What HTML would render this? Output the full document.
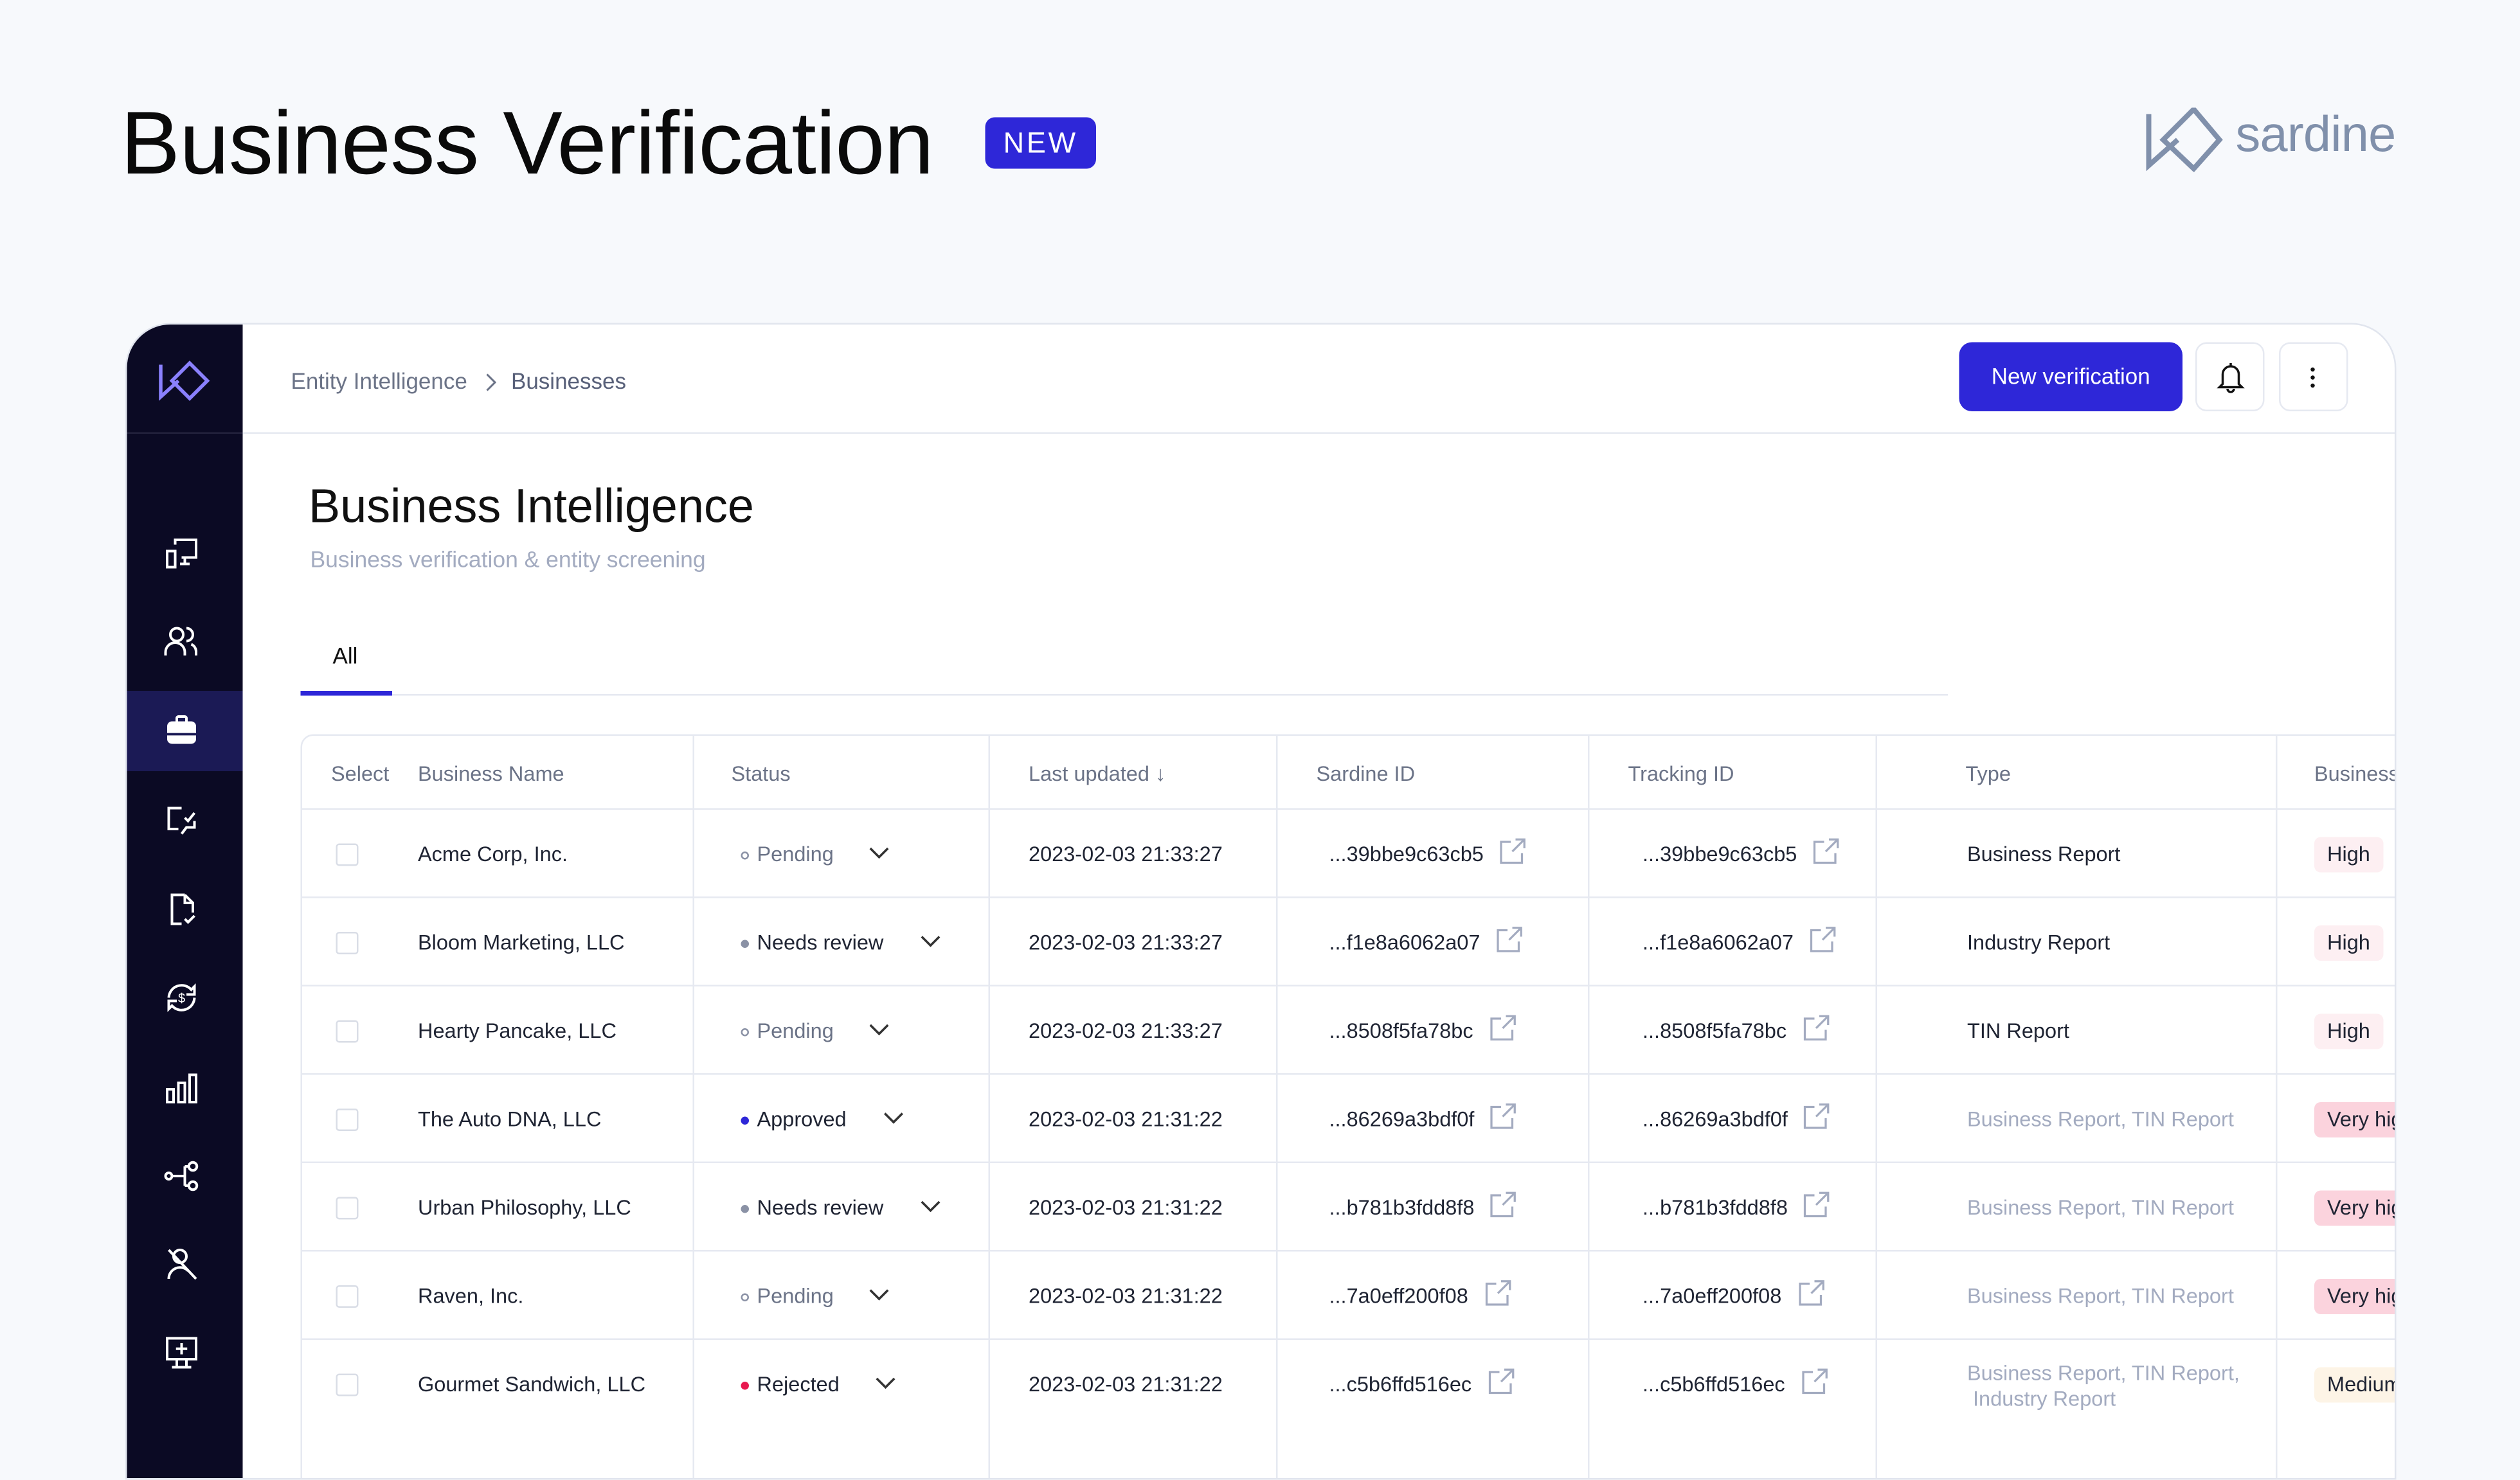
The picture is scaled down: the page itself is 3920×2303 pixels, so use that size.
<!DOCTYPE html>
<html><head><meta charset="utf-8">
<style>
*{margin:0;padding:0;box-sizing:border-box}
html,body{width:3920px;height:2208px;overflow:hidden;background:#f7f9fc}
#s{position:absolute;left:0;top:0;width:1568px;height:884px;transform:scale(2.5);transform-origin:0 0;font-family:"Liberation Sans",sans-serif;color:#1f2433}
.a{position:absolute;white-space:nowrap}
.card{position:absolute;left:78px;top:201px;width:1413px;height:720px;background:#fff;border:1.5px solid #e1e5ee;border-radius:28px 28px 0 0;overflow:hidden}
.side{position:absolute;left:0;top:0;width:72px;height:100%;background:#0b0a24}
.ic{position:absolute;left:22px;width:24px;height:24px}
.t{font-size:13px;line-height:16px}
.h{font-size:13px;color:#6b7387}
.vl{position:absolute;top:256px;width:1px;height:480px;background:#e6e9f1}
.hl{position:absolute;left:108px;width:1320px;height:1px;background:#e6e9f1}
.cb{position:absolute;left:130px;width:14px;height:14px;border:1.2px solid #d9dde6;border-radius:2px}
.dot{position:absolute;width:5px;height:5px;border-radius:50%}
.bd{position:absolute;left:1361px;height:22px;padding:0 8px;line-height:22px;font-size:13px;border-radius:4px;white-space:nowrap}
.ex{position:absolute;width:18px;height:18px}
</style></head><body><div id="s">
<div class="a" style="left:75px;top:57px;font-size:55.5px;font-weight:500;color:#0a0a0a;letter-spacing:-0.3px">Business Verification</div>
<div class="a" style="left:613px;top:73px;width:69px;height:32px;background:#2e27d8;border-radius:6px;color:#fff;font-size:18px;line-height:32px;text-align:center;letter-spacing:1.5px">NEW</div>
<svg class="a" style="left:1335px;top:67px" width="50" height="40" viewBox="0 0 50 40"><path d="M2 4 L2 36 L20 20 M30 1 L11 20 L30 38 L46 20 Z" fill="none" stroke="#8090ab" stroke-width="3.2" stroke-linejoin="miter"/></svg>
<div class="a" style="left:1391px;top:66px;font-size:31px;color:#8090ab;letter-spacing:-0.3px">sardine</div>

<div class="card">
<div class="side">
<svg class="a" style="left:19px;top:22px" width="34" height="26" viewBox="0 0 34 26"><path d="M2 3 L2 23 L13 13 M20 2 L9 13 L20 24 L31 13 Z" fill="none" stroke="#8a80ff" stroke-width="2.2"/></svg>
<div class="a" style="left:0;top:67px;width:72px;height:1px;background:#23223d"></div>
<div class="a" style="left:0;top:228px;width:72px;height:50px;background:#1b1a55"></div>
<svg class="ic" style="top:131px" viewBox="0 0 24 24" fill="none" stroke="#fff" stroke-width="1.6"><path d="M8 6V3h13v11H12M14 14v4M11 18h6"/><rect x="3" y="10" width="5" height="10"/></svg>
<svg class="ic" style="top:185px" viewBox="0 0 24 24" fill="none" stroke="#fff" stroke-width="1.6"><circle cx="9" cy="8" r="4"/><path d="M2 21v-2a6 6 0 0 1 12 0v2M15 4a4 4 0 0 1 0 8M18 14a5 5 0 0 1 3 5v2"/></svg>
<svg class="ic" style="top:241px" viewBox="0 0 24 24"><path d="M9 6V4a1 1 0 0 1 1-1h4a1 1 0 0 1 1 1v2" stroke="#fff" stroke-width="1.6" fill="none"/><rect x="3" y="6" width="18" height="14" rx="3" fill="#fff"/><path d="M3 14h18" stroke="#1b1a55" stroke-width="1.5"/></svg>
<svg class="ic" style="top:297px" viewBox="0 0 24 24" fill="none" stroke="#fff" stroke-width="1.6"><path d="M12 4H4v13h6M14 10l2 2 4-5M20 12v4h-5l-3 4"/></svg>
<svg class="ic" style="top:352px" viewBox="0 0 24 24" fill="none" stroke="#fff" stroke-width="1.6"><path d="M14 3H6v18h6M14 3l5 5v6M14 3v5h5M14 18l2 2 4-4"/></svg>
<svg class="ic" style="top:407px" viewBox="0 0 24 24" fill="none" stroke="#fff" stroke-width="1.6"><path d="M4 12a8 8 0 0 1 14-5l2-2v5h-5M20 12a8 8 0 0 1-14 5l-2 2v-5h5"/><text x="12" y="15" font-size="8" fill="#fff" stroke="none" text-anchor="middle">$</text></svg>
<svg class="ic" style="top:463px" viewBox="0 0 24 24" fill="none" stroke="#fff" stroke-width="1.6"><rect x="3" y="13" width="4" height="8"/><rect x="10" y="9" width="4" height="12"/><rect x="17" y="4" width="4" height="17"/></svg>
<svg class="ic" style="top:518px" viewBox="0 0 24 24" fill="none" stroke="#fff" stroke-width="1.6"><circle cx="4" cy="12" r="2"/><circle cx="19" cy="6" r="2.5"/><circle cx="19" cy="18" r="2.5"/><path d="M6 12h8M14 6h2.5M14 18h2.5M14 6v12"/></svg>
<svg class="ic" style="top:573px" viewBox="0 0 24 24" fill="none" stroke="#fff" stroke-width="1.6"><circle cx="11" cy="7" r="4"/><path d="M4 21a7 7 0 0 1 12-5M4 3l17 18"/></svg>
<svg class="ic" style="top:628px" viewBox="0 0 24 24" fill="none" stroke="#fff" stroke-width="1.6"><rect x="3" y="3" width="18" height="13"/><path d="M12 6v7M8.5 9.5h7M9 16v5M15 16v5M6 21h12"/></svg>
</div>

<div class="a" style="left:102px;top:27px;font-size:14px;color:#6b7387">Entity Intelligence</div>
<svg class="a" style="left:221px;top:29px" width="10" height="14" viewBox="0 0 10 14"><path d="M3 2l5 5-5 5" stroke="#6b7387" stroke-width="1.2" fill="none"/></svg>
<div class="a" style="left:239px;top:27px;font-size:14px;color:#586079">Businesses</div>
<div class="a" style="left:1140px;top:11px;width:139px;height:43px;background:#2e27d8;border-radius:8px;color:#fff;font-size:14px;line-height:43px;text-align:center">New verification</div>
<div class="a" style="left:1287px;top:11px;width:43px;height:43px;border:1px solid #e6e9f1;border-radius:7px"></div>
<svg class="a" style="left:1299px;top:22px" width="20" height="22" viewBox="0 0 20 22"><path d="M10 2v2M5 15V9a5 5 0 0 1 10 0v6l2 2H3zM8 18a2 2 0 0 0 4 0" stroke="#111" stroke-width="1.4" fill="none"/></svg>
<div class="a" style="left:1339px;top:11px;width:43px;height:43px;border:1px solid #e6e9f1;border-radius:7px"></div>
<svg class="a" style="left:1357px;top:25px" width="6" height="16"><circle cx="3" cy="3" r="1.3" fill="#111"/><circle cx="3" cy="8" r="1.3" fill="#111"/><circle cx="3" cy="13" r="1.3" fill="#111"/></svg>
<div class="a" style="left:72px;top:67px;width:1341px;height:1px;background:#e6e9f1"></div>

<div class="a" style="left:113px;top:97px;font-size:29.5px;color:#111">Business Intelligence</div>
<div class="a" style="left:114px;top:139px;font-size:14.2px;color:#a3abc0">Business verification &amp; entity screening</div>
<div class="a" style="left:128px;top:198px;font-size:14px;color:#111">All</div>
<div class="a" style="left:108px;top:230px;width:1025px;height:1px;background:#e6e9f1"></div>
<div class="a" style="left:108px;top:228px;width:57px;height:3px;background:#2e27d8"></div>

<div class="a" style="left:108px;top:255px;width:1320px;height:500px;border:1px solid #e6e9f1;border-radius:8px 0 0 0"></div>
<div class="vl" style="left:352px"></div><div class="vl" style="left:536px"></div><div class="vl" style="left:715px"></div><div class="vl" style="left:909px"></div><div class="vl" style="left:1088px"></div><div class="vl" style="left:1337px"></div>
<div class="hl" style="top:301px"></div><div class="hl" style="top:356px"></div><div class="hl" style="top:411px"></div><div class="hl" style="top:466px"></div><div class="hl" style="top:521px"></div><div class="hl" style="top:576px"></div><div class="hl" style="top:631px"></div>

<div class="a h" style="left:127px;top:272px">Select</div>
<div class="a h" style="left:181px;top:272px">Business Name</div>
<div class="a h" style="left:376px;top:272px">Status</div>
<div class="a h" style="left:561px;top:272px">Last updated ↓</div>
<div class="a h" style="left:740px;top:272px">Sardine ID</div>
<div class="a h" style="left:934px;top:272px">Tracking ID</div>
<div class="a h" style="left:1144px;top:272px">Type</div>
<div class="a h" style="left:1361px;top:272px">Business</div>

<div id="rows"></div>
</div>
</div>
<script>
var R=[
["Acme Corp, Inc.","Pending","o","2023-02-03 21:33:27","...39bbe9c63cb5","Business Report","High"],
["Bloom Marketing, LLC","Needs review","g","2023-02-03 21:33:27","...f1e8a6062a07","Industry Report","High"],
["Hearty Pancake, LLC","Pending","o","2023-02-03 21:33:27","...8508f5fa78bc","TIN Report","High"],
["The Auto DNA, LLC","Approved","b","2023-02-03 21:31:22","...86269a3bdf0f","Business Report, TIN Report","Very high"],
["Urban Philosophy, LLC","Needs review","g","2023-02-03 21:31:22","...b781b3fdd8f8","Business Report, TIN Report","Very high"],
["Raven, Inc.","Pending","o","2023-02-03 21:31:22","...7a0eff200f08","Business Report, TIN Report","Very high"],
["Gourmet Sandwich, LLC","Rejected","r","2023-02-03 21:31:22","...c5b6ffd516ec","Business Report, TIN Report,<br>&nbsp;Industry Report","Medium"]];
var chev={"Pending":461,"Needs review":493,"Approved":470,"Rejected":465};
var ext='<path d="M8 3H2v13h13v-6M11 1.5h5.5V7M16.5 1.5L9 9"/>';
var h='';
R.forEach(function(r,i){
 var c=330+55*i, y=c-8;
 h+='<div class="cb" style="top:'+(c-7)+'px"></div>';
 h+='<div class="a t" style="left:181px;top:'+y+'px">'+r[0]+'</div>';
 var dc={o:'',g:'background:#8a91a5',b:'background:#2e27d8',r:'background:#e8194f'}[r[2]];
 if(r[2]=='o') h+='<div class="dot" style="left:382px;top:'+(c-2.5)+'px;border:1.2px solid #8a91a5"></div>';
 else h+='<div class="dot" style="left:382px;top:'+(c-2.5)+'px;'+dc+'"></div>';
 h+='<div class="a t" style="left:392px;top:'+y+'px;color:'+(r[2]=='o'?'#6b7387':'#1f2433')+'">'+r[1]+'</div>';
 h+='<svg class="a" style="left:'+chev[r[1]]+'px;top:'+(c-6)+'px" width="14" height="10" viewBox="0 0 14 10"><path d="M1.5 2l5.5 5.5L12.5 2" stroke="#333" stroke-width="1.4" fill="none"/></svg>';
 h+='<div class="a t" style="left:561px;top:'+y+'px">'+r[3]+'</div>';
 [748,943].forEach(function(x){
  h+='<div class="a t" id="id'+i+'_'+x+'" style="left:'+x+'px;top:'+y+'px">'+r[4]+'</div>';
 });
 var gray=r[5].indexOf(',')>0;
 h+='<div class="a t" style="left:1145px;top:'+(r[5].indexOf('<br>')>0?c-15:y)+'px;color:'+(gray?'#a3abc0':'#1f2433')+'">'+r[5]+'</div>';
 var bg={"High":"#fdeff2","Very high":"#fbd3dd","Medium":"#fdf4e6"}[r[6]];
 h+='<div class="bd" style="top:'+(c-11)+'px;background:'+bg+'">'+r[6]+'</div>';
});
var rows=document.getElementById('rows');
rows.outerHTML=h;
R.forEach(function(r,i){
 [748,943].forEach(function(x){
  var el=document.getElementById('id'+i+'_'+x);
  var w=el.getBoundingClientRect().width/2.5;
  var s=document.createElementNS('http://www.w3.org/2000/svg','svg');
  s.setAttribute('class','ex');s.setAttribute('viewBox','0 0 18 18');
  s.setAttribute('fill','none');s.setAttribute('stroke','#a3abc0');s.setAttribute('stroke-width','1.3');
  s.style.left=(x+w+9)+'px';s.style.top=(330+55*i-11)+'px';
  s.innerHTML=ext;
  el.parentNode.appendChild(s);
 });
});
</script>
</body></html>
